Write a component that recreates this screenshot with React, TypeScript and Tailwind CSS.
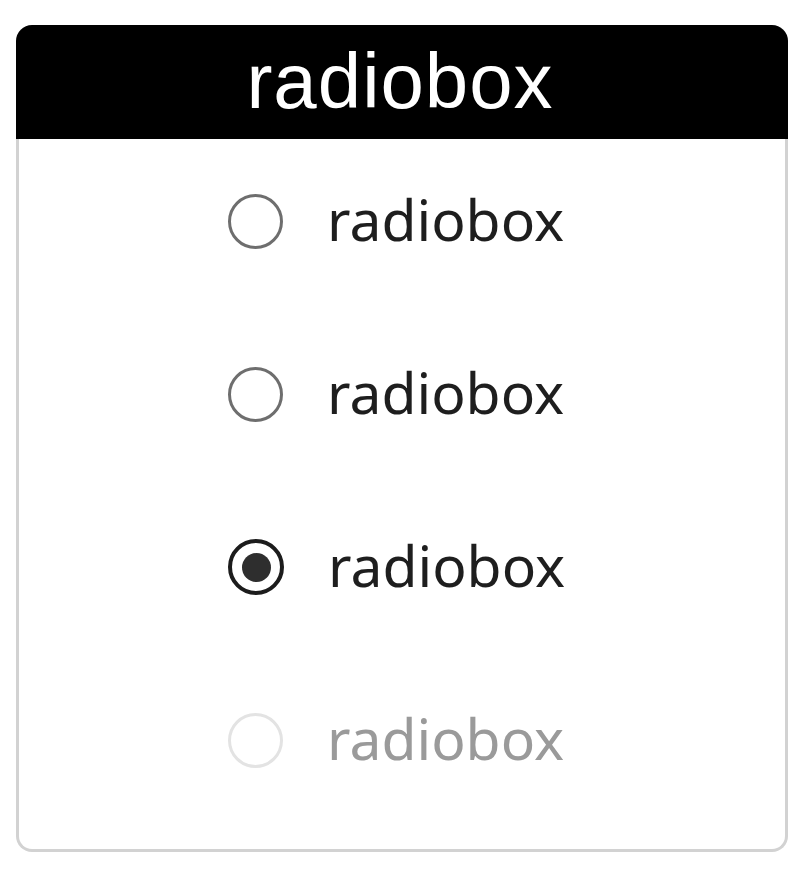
type Option = {
  label: string
  checked?: boolean
  disabled?: boolean
}

const options: Option[] = [
  { label: 'radiobox' },
  { label: 'radiobox' },
  { label: 'radiobox', checked: true },
  { label: 'radiobox', disabled: true },
]

function Radio({ checked, disabled }: { checked?: boolean; disabled?: boolean }) {
  if (checked) {
    return (
      <span className="w-[56px] h-[56px] rounded-full border-[4px] border-[#1c1c1c] flex items-center justify-center shrink-0">
        <span className="w-[29px] h-[29px] rounded-full bg-[#2e2e2e]" />
      </span>
    )
  }
  return (
    <span
      className={`w-[55px] h-[55px] rounded-full border-[3px] shrink-0 ${
        disabled ? 'border-[#e3e3e3]' : 'border-[#6e6e6e]'
      }`}
    />
  )
}

export default function App() {
  return (
    <div className="min-h-[887px] bg-white pt-[25px] pl-[16px]">
      <div className="w-[772px]">
        {/* Title bar */}
        <div className="h-[114px] bg-black rounded-t-[16px] flex items-center justify-center">
          <span className="text-white text-[78px] leading-none tracking-[1px] font-['Liberation_Sans',Arial,sans-serif] -mt-[2px] pr-[4px]">
            radiobox
          </span>
        </div>

        {/* Options */}
        <div className="border-[3px] border-t-0 border-[#d2d2d2] rounded-b-[16px] pt-[55px] pb-[82px] pl-[209px] flex flex-col gap-[119px]">
          {options.map((opt, i) => (
            <label key={i} className="h-[54px] flex items-center gap-[44px]">
              <Radio checked={opt.checked} disabled={opt.disabled} />
              <span
                className={`text-[57px] leading-none font-['Noto_Sans',sans-serif] -mt-[3px] ${
                  opt.disabled ? 'text-[#9a9a9a]' : 'text-[#1e1e1e]'
                }`}
              >
                {opt.label}
              </span>
            </label>
          ))}
        </div>
      </div>
    </div>
  )
}
